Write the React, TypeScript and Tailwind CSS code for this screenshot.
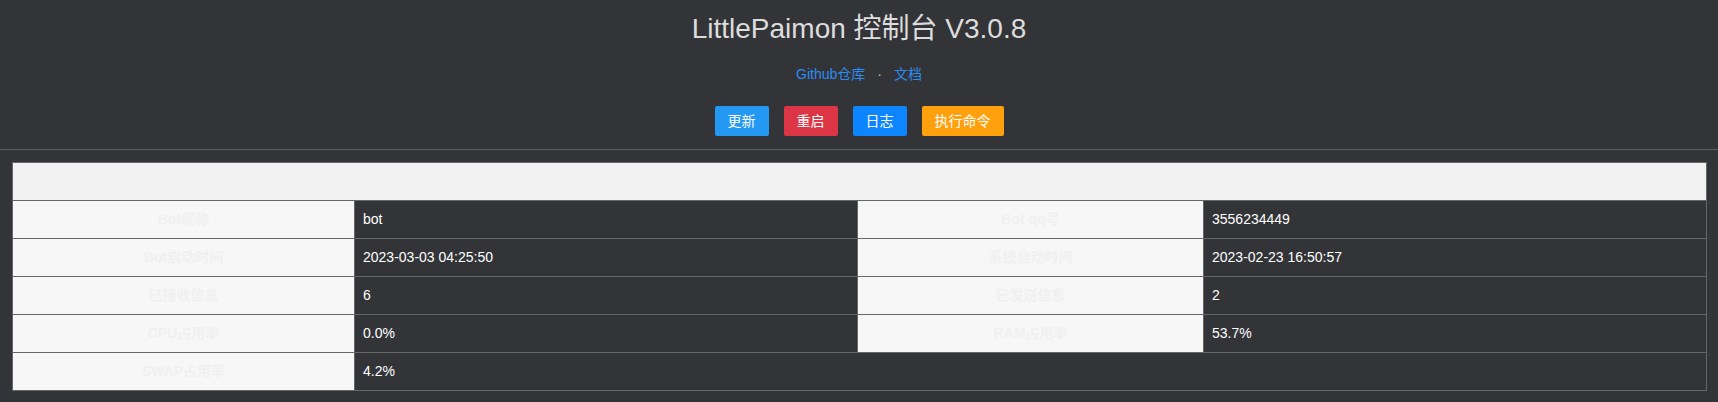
import React from "react";

type Row = { l1: string; v1: string; l2?: string; v2?: string };

const rows: Row[] = [
  { l1: "Bot昵称", v1: "bot", l2: "Bot qq号", v2: "3556234449" },
  { l1: "Bot启动时间", v1: "2023-03-03 04:25:50", l2: "系统启动时间", v2: "2023-02-23 16:50:57" },
  { l1: "已接收信息", v1: "6", l2: "已发送信息", v2: "2" },
  { l1: "CPU占用率", v1: "0.0%", l2: "RAM占用率", v2: "53.7%" },
  { l1: "SWAP占用率", v1: "4.2%" },
];

const labelCls =
  "h-[38px] border border-[#666666] bg-[#f7f7f7] text-center text-[14px] font-bold text-[#f0f0f0] p-0";
const valueCls =
  "h-[38px] border border-[#666666] bg-[#333438] text-left text-[14px] text-white pl-[8px] p-0";

export default function App() {
  return (
    <div
      className="min-h-[402px] w-full bg-[#333438] pb-[12px]"
      style={{ fontFamily: '"Liberation Sans", Arial, "Noto Sans CJK SC", sans-serif' }}
    >
      <header className="flex flex-col items-center pt-[12px]">
        <h1 className="text-[28px] leading-[34px] text-[#dddddd] font-normal">
          LittlePaimon 控制台 V3.0.8
        </h1>
        <div className="mt-[18px] flex items-center gap-[12px] text-[14px] leading-[20px]">
          <a className="text-[#2b8cf2]">Github仓库</a>
          <span className="text-[#bbbbbb]">·</span>
          <a className="text-[#2b8cf2]">文档</a>
        </div>
        <div className="mt-[22px] flex gap-[15px]">
          <button className="h-[30px] rounded-[2px] bg-[#2399f3] px-[13px] text-[14px] text-white">更新</button>
          <button className="h-[30px] rounded-[2px] bg-[#dc3545] px-[13px] text-[14px] text-white">重启</button>
          <button className="h-[30px] rounded-[2px] bg-[#0d85ff] px-[13px] text-[14px] text-white">日志</button>
          <button className="h-[30px] rounded-[2px] bg-[#ffa00c] px-[13px] text-[14px] text-white">执行命令</button>
        </div>
      </header>
      <div className="mt-[13px] h-px w-full bg-[#5f5f5f]" />
      <div className="mx-[12px] mt-[12px]">
        <table className="w-full table-fixed border-collapse border border-[#666666]">
          <colgroup>
            <col className="w-[342px]" />
            <col className="w-[503px]" />
            <col className="w-[346px]" />
            <col className="w-[503px]" />
          </colgroup>
          <thead>
            <tr>
              <th colSpan={4} className="h-[38px] border border-[#666666] bg-[#f2f2f2] p-0"></th>
            </tr>
          </thead>
          <tbody>
            {rows.map((r) => (
              <tr key={r.l1}>
                <td className={labelCls}>{r.l1}</td>
                {r.l2 ? (
                  <>
                    <td className={valueCls}>{r.v1}</td>
                    <td className={labelCls}>{r.l2}</td>
                    <td className={valueCls}>{r.v2}</td>
                  </>
                ) : (
                  <td colSpan={3} className={valueCls}>
                    {r.v1}
                  </td>
                )}
              </tr>
            ))}
          </tbody>
        </table>
      </div>
    </div>
  );
}
